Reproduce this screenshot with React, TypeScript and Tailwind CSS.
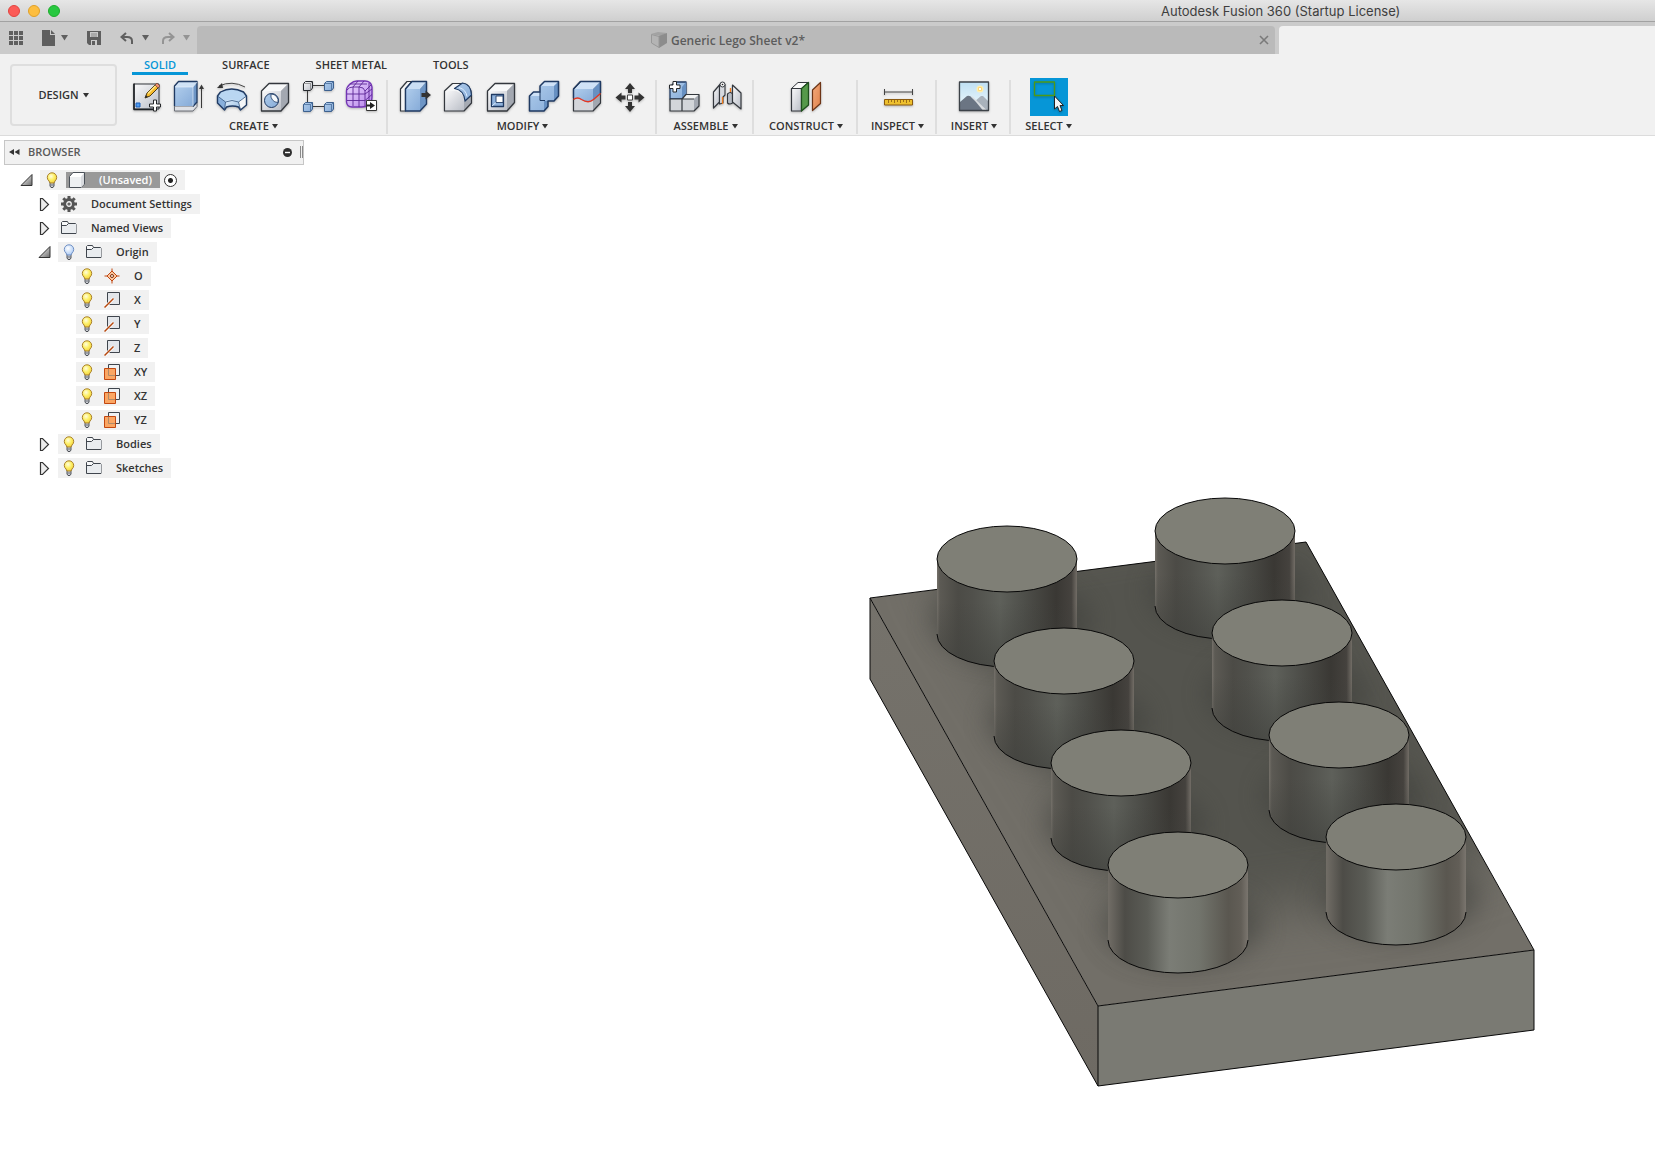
import { useState } from "react";
import type { ReactNode } from "react";
import clsx from "clsx";

type ChildrenType = { children: ReactNode };

const App = () => {
  return (
    <div className="min-h-screen flex flex-col bg-white font-['Open_Sans','Noto_Sans',sans-serif] text-[#333333] select-none">
      <Gradients />
      <TitleBar />
      <DocumentBar />
      <Ribbon />
      <Viewport />
    </div>
  );
};

export default App;

/* Window chrome */

const TitleBar = () => {
  return (
    <header className="h-[22px] shrink-0 flex items-center pl-2 border-b border-[#a2a2a2] bg-linear-to-b from-[#e6e6e6] to-[#cfcfcf]">
      <div className="flex gap-2">
        <button aria-label="Close" className="size-3 rounded-full bg-[#fc5b57] border border-[#e2443f]" />
        <button aria-label="Minimize" className="size-3 rounded-full bg-[#fdbe40] border border-[#e0a028]" />
        <button aria-label="Zoom" className="size-3 rounded-full bg-[#28c840] border border-[#1dad2b]" />
      </div>
      <h1 className="ml-[1101px] pt-px font-[Inter,sans-serif] text-[13px] leading-5 text-[#3e3e3e] whitespace-nowrap">
        Autodesk Fusion 360 (Startup License)
      </h1>
    </header>
  );
};

const Caret = ({ className }: { className?: string }) => (
  <svg width="7" height="6" viewBox="0 0 7 6" className={clsx("shrink-0", className)}>
    <path d="M0 0h7L3.5 5.5z" fill="currentColor" />
  </svg>
);

const SmallCaret = () => (
  <svg width="6" height="5" viewBox="0 0 6 5" className="shrink-0">
    <path d="M0 0h6L3 4.5z" fill="currentColor" />
  </svg>
);

const DocumentBar = () => {
  return (
    <div className="h-8 shrink-0 flex bg-[#cbcbcb] text-[#5f5f5f]">
      <div className="flex items-center pl-[9px] pr-[7px]">
        <button aria-label="Data panel">
          <svg width="14" height="14" viewBox="0 0 14 14" fill="currentColor">
            {[0, 5, 10].map((y) =>
              [0, 5, 10].map((x) => (
                <rect key={`${x}-${y}`} x={x} y={y} width="4" height="4" />
              )),
            )}
          </svg>
        </button>
        <button aria-label="File" className="ml-[19px] flex items-center gap-1.5">
          <svg width="13" height="16" viewBox="0 0 13 16" fill="currentColor">
            <path d="M0 0h8v5h5v11H0z" />
            <path d="M9 0l4 4H9z" />
          </svg>
          <Caret />
        </button>
        <button aria-label="Save" className="ml-[19px]">
          <svg width="14" height="14" viewBox="0 0 14 14">
            <path d="M0 0h14v14H2l-2-2z" fill="currentColor" />
            <path d="M3 1h8v5H3zM4 9h6v5H4z" fill="#cbcbcb" />
            <path d="M4 3h6M4 5h6" stroke="#8a8a8a" />
            <path d="M5 10h3v4H5z" fill="currentColor" />
          </svg>
        </button>
        <button aria-label="Undo" className="ml-[19px] flex items-center gap-[9px]">
          <svg width="13" height="13" viewBox="0 0 13 13" fill="none" stroke="currentColor" strokeWidth="2">
            <path d="M6 1L1.5 5 6 9M2 5h5q5 0 5 4v3" />
          </svg>
          <Caret />
        </button>
        <button aria-label="Redo" className="ml-[13px] flex items-center gap-2 text-[#949494]">
          <svg width="13" height="13" viewBox="0 0 13 13" fill="none" stroke="currentColor" strokeWidth="2">
            <path d="M7 1l4.500 4L7 9M11 5H6q-5 0-5 4v3" />
          </svg>
          <Caret />
        </button>
      </div>
      <div className="flex-[1078] mt-1 flex items-center rounded-t bg-[#bababa]">
        <div className="flex-1 flex items-center justify-center gap-1">
          <svg width="16" height="16" viewBox="0 0 16 16">
            <path d="M0 2l7-2 9 1-6 3z" fill="#a2a2a2" />
            <path d="M16 1v10l-8 5V4z" fill="#8c8c8c" />
            <path d="M.5 2.5L8 4.5v11L.5 11z" fill="#b4b4b4" stroke="#989898" />
          </svg>
          <span className="pt-0.5 text-[12px] font-semibold text-[#5c5c5c] leading-4">
            Generic Lego Sheet v2*
          </span>
        </div>
        <button aria-label="Close document" className="mr-1.5">
          <svg width="10" height="10" viewBox="0 0 10 10">
            <path d="M1 1l8 8M9 1L1 9" stroke="#7a7a7a" strokeWidth="1.6" />
          </svg>
        </button>
      </div>
      <div className="flex-[376] ml-1 mt-1 rounded-tl bg-[#f1f1f1]" />
    </div>
  );
};

/* Ribbon */

const tabs = ["SOLID", "SURFACE", "SHEET METAL", "TOOLS"];

const Ribbon = () => {
  const [active, setActive] = useState("SOLID");

  return (
    <div className="h-[82px] shrink-0 flex bg-[#f1f1f1] border-b border-[#dcdcdc]">
      <button className="ml-2.5 mt-2.5 w-[107px] h-[62px] shrink-0 flex items-center justify-center gap-1 rounded border-2 border-[#dedede] text-[11px] font-semibold">
        DESIGN
        <SmallCaret />
      </button>
      <div>
        <nav className="flex gap-[22px] pl-[15px] pt-[3px]">
          {tabs.map((tab) => (
            <button
              key={tab}
              onClick={() => setActive(tab)}
              className={clsx(
                "h-[18px] px-3 border-b-3 text-[11px] leading-4 font-semibold whitespace-nowrap",
                tab === active ? "border-[#0696d7] text-[#0696d7]" : "border-transparent",
              )}
            >
              {tab}
            </button>
          ))}
        </nav>
        <div className="flex mt-[3px] pl-0.5">
          <Group label="CREATE" width="w-[269px]" icons={[SketchIcon, ExtrudeIcon, RevolveIcon, HoleIcon, PatternIcon, FormIcon]} />
          <Group label="MODIFY" width="w-[269px]" icons={[PressPullIcon, FilletIcon, ShellIcon, CombineIcon, SplitIcon, MoveIcon]} />
          <Group label="ASSEMBLE" width="w-[97px]" icons={[ComponentIcon, JointIcon]} />
          <Group label="CONSTRUCT" width="w-[104px]" icons={[PlaneIcon]} />
          <Group label="INSPECT" width="w-[79px]" icons={[MeasureIcon]} />
          <Group label="INSERT" width="w-[74px]" icons={[ImageIcon]} />
          <Group label="SELECT" width="w-[75px]" icons={[SelectIcon]} selected />
        </div>
      </div>
    </div>
  );
};

const Group = ({
  label,
  width,
  icons,
  selected,
}: {
  label: string;
  width: string;
  icons: (() => ReactNode)[];
  selected?: boolean;
}) => {
  return (
    <div className={clsx("relative flex flex-col items-center", width)}>
      <div className="flex gap-[5px]">
        {icons.map((Icon, i) => (
          <button
            key={i}
            aria-label={`${label} tool ${i + 1}`}
            className={clsx(
              "size-[38px] flex items-center justify-center",
              selected ? "bg-[#0696d7]" : "pb-0.5",
            )}
          >
            <Icon />
          </button>
        ))}
      </div>
      <button className="mt-0.5 flex items-center gap-[3px] text-[11px] leading-4 font-semibold">
        {label}
        <SmallCaret />
      </button>
      {!selected && <span className="absolute right-0 top-0.5 bottom-0 w-0.5 bg-[#dedede]" />}
    </div>
  );
};

const Gradients = () => (
  <svg className="absolute size-0" aria-hidden="true">
    <defs>
      <linearGradient id="grey" x1="0" y1="0" x2="1" y2="1">
        <stop offset="0" stopColor="#fafafb" />
        <stop offset="1" stopColor="#b9bdc6" />
      </linearGradient>
      <linearGradient id="blue" x1="0" y1="0" x2="1" y2="1">
        <stop offset="0" stopColor="#b0cdec" />
        <stop offset="1" stopColor="#86abd8" />
      </linearGradient>
      <linearGradient id="paleBlue" x1="0" y1="0" x2="1" y2="1">
        <stop offset="0" stopColor="#e4f1fc" />
        <stop offset="1" stopColor="#9cc0e5" />
      </linearGradient>
      <linearGradient id="purple" x1="0" y1="0" x2="1" y2="1">
        <stop offset="0" stopColor="#ecd9ff" />
        <stop offset="1" stopColor="#b684ea" />
      </linearGradient>
      <linearGradient id="orange" x1="0" y1="0" x2="1" y2="1">
        <stop offset="0" stopColor="#f3ab7d" />
        <stop offset="1" stopColor="#e0814b" />
      </linearGradient>
      <linearGradient id="sky" x1="0" y1="0" x2="0" y2="1">
        <stop offset="0" stopColor="#bfe0f3" />
        <stop offset="1" stopColor="#f2fafd" />
      </linearGradient>
      <linearGradient id="expander" x1="0" y1="0" x2="1" y2="1">
        <stop offset="0.3" stopColor="#d8d8d8" />
        <stop offset="1" stopColor="#6b6b6b" />
      </linearGradient>
      <radialGradient id="bulbOn" cx="0.4" cy="0.35" r="0.7">
        <stop offset="0" stopColor="#fffde0" />
        <stop offset="0.5" stopColor="#fdf067" />
        <stop offset="1" stopColor="#f3cf3a" />
      </radialGradient>
      <radialGradient id="bulbOff" cx="0.4" cy="0.35" r="0.7">
        <stop offset="0" stopColor="#ffffff" />
        <stop offset="1" stopColor="#a9c9f5" />
      </radialGradient>
    </defs>
  </svg>
);

const Svg32 = ({ children }: ChildrenType) => (
  <svg
    width="32"
    height="32"
    viewBox="0 0 32 32"
    fill="none"
    strokeLinejoin="round"
    className="shrink-0 drop-shadow-[0_1px_1px_rgba(0,0,0,0.25)]"
  >
    {children}
  </svg>
);

const DARK = "#33373d";
const NAVY = "#1f3a63";

const SketchIcon = () => (
  <Svg32>
    <path d="M4 4h25v25H4z" fill="url(#grey)" stroke={DARK} />
    <path d="M4 3.5V29.5h20" stroke="#1e2125" strokeWidth="1.6" />
    <rect x="6" y="23" width="4" height="4" fill="#4f9bf0" stroke="#1b5fb8" />
    <path d="M15 18l2-5L26 4l3 3-9 9z" fill="#f6bb2b" stroke="#4c3a14" />
    <path d="M17.5 13l8.5-8.5 1 1-8.500 8.500z" fill="#fde58a" />
    <path d="M25 5l2-2 3 3-2 2z" fill="#e98d70" stroke="#6b4034" strokeWidth="0.7" />
    <path d="M15 18l1-3 2 2z" fill="#2b2b2b" />
    <path d="M23.5 20h3v4h4v3h-4v4h-3v-4h-4v-3h4z" fill="#fff" stroke="#26282b" />
  </Svg32>
);

const ExtrudeIcon = () => (
  <Svg32>
    <path d="M1.5 26H20l4-4v4.5L20 31H1.5z" fill="#dfe1e6" stroke="#6a6e76" />
    <path d="M1.5 7l4-5H24l-4 5z" fill="#cfe2f6" />
    <path d="M1.5 7H20v19H1.5z" fill="url(#blue)" />
    <path d="M20 7l4-5v20l-4 4z" fill="#6e96c6" />
    <path d="M1.5 26V6l4-4.500H24V22l-4 4.500" stroke={NAVY} strokeWidth="1.3" />
    <path d="M2 7h18l4-5M20 7v19" stroke="#e2eefa" strokeWidth="0.7" />
    <path d="M28.5 28V7" stroke="#3a3a3a" />
    <path d="M28.5 4.5L31 9h-5z" fill="#3a3a3a" />
  </Svg32>
);

const RevolveIcon = () => (
  <Svg32>
    <path d="M3 6q13-6 26 1" stroke="#444" />
    <path d="M1 8l5-5 1 5z" fill="#333" />
    <path d="M1.5 16l3-4q11-6 23 0l3 4v9l-6 5-2-3q-6-2-12 0l-2 3-7-7z" fill="#b9d6f2" />
    <path d="M9.5 21q6.500-3 13 0v6q-6-2-12 0l-2 3z" fill="url(#paleBlue)" />
    <path d="M1.5 16v7l7 7 1-8z" fill="#89b0dc" />
    <path d="M22.5 22l8-6v9l-6 5z" fill="#f4f6f8" />
    <path d="M1.5 16l3-4q11-6 23 0l3 4v9l-6 5-2-3q-6-2-12 0l-2 3-7-7z" stroke={NAVY} strokeWidth="1.4" />
    <path d="M1.5 16l8 6q6.500-3 13 0l8-6M9.500 22l-1 8M22.500 22l2 8" stroke="#35557f" strokeWidth="0.8" />
  </Svg32>
);

/* grey block seen from the front left, shared by several tools */
const Block = () => (
  <>
    <path d="M2.5 11L10 3.500h19.500L22 11z" fill="#f7f8f9" />
    <path d="M2.5 11H22v20H2.500z" fill="url(#grey)" />
    <path d="M22 11l7.500-7.500v19L22 31z" fill="#a3a8b1" />
    <path d="M2.5 31V11L10 3.500h19.500v19L22 31z" stroke={DARK} strokeWidth="1.3" />
  </>
);

const HoleIcon = () => (
  <Svg32>
    <Block />
    <circle cx="12.5" cy="20.5" r="7" fill="url(#blue)" stroke={NAVY} />
    <path d="M12 14a7 7 0 0 0 7 8.500A7 7 0 0 0 12 14z" fill="#f6f9fc" stroke={NAVY} strokeWidth="0.8" />
  </Svg32>
);

const SmallBox = ({ x, y, grey }: { x: number; y: number; grey?: boolean }) => (
  <g transform={`translate(${x} ${y})`}>
    <path
      d="M.5 9.500V2.500l2-2h7V7l-2 2.500z"
      fill={grey ? "url(#grey)" : "url(#blue)"}
      stroke={grey ? "#25292e" : "#3d618f"}
    />
    <path d="M.5 2.500h7v7M7.500 2.500l2-2" stroke={grey ? "#777" : "#3d618f"} strokeWidth="0.7" />
  </g>
);

const PatternIcon = () => (
  <Svg32>
    <path d="M10 5.500h12M5.500 10v12M10 26.500h12" stroke="#3a3a3a" />
    <SmallBox x={1} y={1} grey />
    <SmallBox x={22} y={1} />
    <SmallBox x={1} y={22} />
    <SmallBox x={22} y={22} />
  </Svg32>
);

const FormIcon = () => (
  <Svg32>
    <path
      d="M1.5 11q0-4 3.500-7t7-3h8q6 0 7 6v10q0 5-4 8-2 2-6 2H7q-5 0-5.500-5z"
      fill="url(#purple)"
      stroke="#7335b5"
      strokeWidth="1.4"
    />
    <path
      d="M2 10q2-3 6-3h6q5 0 6 4v15M8 7v19M14 7v20M2 14h18M2 20.500h18M20 11l6-6M20 14l7-5M20 20.500l7-6M24 3v20M8 7l5-6M14 7l5-6M5 4h17"
      stroke="#5b2795"
      strokeWidth="0.9"
    />
    <path d="M21.5 20.500h10v10h-10z" fill="#fff" stroke="#333" />
    <path d="M22 24.500h3V22l5 3.500-5 3.500v-2.500h-3z" fill="#222" />
  </Svg32>
);

const PressPullIcon = () => (
  <Svg32>
    <path d="M1.5 31V9L8 1.500h5L6.500 9v22z" fill="#f4f5f6" stroke={DARK} strokeWidth="1.2" />
    <path d="M6.5 9L13 1.500h14.500L21 9z" fill="#cbdff5" />
    <path d="M6.5 9H21v22H6.500z" fill="url(#blue)" />
    <path d="M21 9l6.500-7.500V24L21 31z" fill="#6d95c5" />
    <path d="M6.5 31V9L13 1.500h14.500V24L21 31z" stroke={NAVY} strokeWidth="1.4" />
    <path d="M22.5 13h4v-2.500l5.500 4.500-5.500 4.500V17h-4z" fill="#333" />
  </Svg32>
);

const FilletIcon = () => (
  <Svg32>
    <path d="M2.5 11l8-7.500H22q7 2 7.500 12V23L22 31H2.500z" fill="#f5f6f7" />
    <path d="M2.5 11H14q8 2 8 10v10H2.500z" fill="url(#grey)" />
    <path d="M22 21l7.500-6v8L22 31z" fill="#a5aab3" />
    <path d="M2.5 31V11l8-7.500H22q7 2 7.500 12V23L22 31z" stroke={DARK} strokeWidth="1.2" />
    <path d="M12.5 8.500L20.500 3Q29 4 29.500 15l-6.500 6q-1-11-10.500-12.500z" fill="url(#blue)" stroke={NAVY} strokeWidth="1.2" />
    <path d="M17 7.500q7 2 8 9" stroke="#dcecff" />
  </Svg32>
);

const ShellIcon = () => (
  <Svg32>
    <Block />
    <path d="M6.5 14.500h12v12h-12z" fill="#8fb2dc" stroke={NAVY} strokeWidth="1.3" />
    <path d="M7 26l4-3.500h7" stroke="#dcebfb" />
    <path d="M11 16h7v6.500h-7z" fill="#fff" stroke={NAVY} strokeWidth="0.9" />
  </Svg32>
);

const CombineIcon = () => (
  <Svg32>
    <path d="M1.5 31V16l4-4H12V6l4.500-4.500h14V16L26 21h-6v5.500L16 31z" fill="url(#blue)" />
    <path d="M12 6l4.500-4.500h14L26 6z" fill="#cfe2f7" />
    <path d="M1.5 16l4-4H12v4z" fill="#cfe2f7" />
    <path d="M26 6l4.500-4.500V16L26 21zM16 21h4v5.500L16 31z" fill="#6790c2" />
    <path d="M1.5 31V16l4-4H12V6l4.500-4.500h14V16L26 21h-6v5.500L16 31z" stroke={NAVY} strokeWidth="1.5" />
    <path d="M12 12v8.500h5" stroke={NAVY} />
  </Svg32>
);

const SplitIcon = () => (
  <Svg32>
    <path d="M2.5 9l7-7.500h20L22 9z" fill="#cfe2f7" />
    <path d="M2.5 9H22v14H2.500z" fill="url(#blue)" />
    <path d="M22 9l7.500-7.500v14L22 21z" fill="#6790c2" />
    <path d="M2.5 20q4-3 8 0 7 4 11.500 0v11H2.500z" fill="#d3d5da" />
    <path d="M22 20l7.500-6v9L22 31z" fill="#a2a7b0" />
    <path d="M2.5 31V9l7-7.500h20V23L22 31z" stroke={DARK} strokeWidth="1.2" />
    <path d="M2.5 18V9l7-7.500h20V13" stroke={NAVY} strokeWidth="1.3" />
    <path d="M2.5 19.500q4-3 8 0 7 4.500 12 0l7-6" stroke="#e5341f" strokeWidth="1.3" />
  </Svg32>
);

const MoveIcon = () => (
  <Svg32>
    <path
      d="M16 3l5 6h-3v4h-4V9h-3zM16 32l5-6h-3v-4h-4v4h-3zM1.500 17.500l6-5v3h4v4h-4v3zM30.500 17.500l-6-5v3h-4v4h4v3z"
      fill="#333"
    />
    <rect x="13.5" y="15" width="5" height="5" fill="#fff" stroke="#444" />
  </Svg32>
);

const ComponentIcon = () => (
  <Svg32>
    <path d="M2 19V7l5-5h11v12l-4 5z" fill="url(#blue)" stroke={NAVY} strokeWidth="1.3" />
    <path d="M14 7l4-5v12l-4 5z" fill="#6790c2" />
    <path d="M14 19l4-4.500h13L26 19z" fill="#f1f2f3" />
    <path d="M2 19h24v12H2z" fill="#d3d6da" />
    <path d="M26 19l5-4.500V26l-5 5z" fill="#a5aab3" />
    <path d="M2 19h12l4-4.500h13V26l-5 5H2zM14 19v12M14 19h12" stroke={DARK} strokeWidth="1.2" />
    <path d="M5 1.500h3.500V5H12v3.500H8.500V12H5V8.500H1.500V5H5z" fill="#fff" stroke="#26282b" />
  </Svg32>
);

const JointIcon = () => (
  <Svg32>
    <path d="M2.5 12l6-7v17l-6 6z" fill="url(#grey)" stroke={DARK} strokeWidth="1.2" />
    <path d="M8.5 24V5q1-2 3-2t2.500 2v10l-2 2v6z" fill="#d6d9de" stroke={DARK} strokeWidth="1.1" />
    <circle cx="11.5" cy="4.5" r="2.5" fill="#f4f4f4" stroke={DARK} />
    <circle cx="11.5" cy="4.5" r="0.8" fill="#222" />
    <path d="M11.5 17v7M19.500 8v6" stroke="#ee7a1c" strokeWidth="1.3" />
    <path d="M16.5 14q3-3 5 0v9q-3 2-5 0z" fill="#b7bcc5" stroke={DARK} strokeWidth="1.1" />
    <path d="M21.5 5l8.500 8v16l-8.500-7z" fill="url(#grey)" stroke={DARK} strokeWidth="1.2" />
  </Svg32>
);

const PlaneIcon = () => (
  <Svg32>
    <path d="M1.5 8.500l6.500-6h10l-6.500 6z" fill="#fafafa" stroke={DARK} />
    <path d="M1.5 8.500h10V31h-10z" fill="url(#grey)" stroke={DARK} strokeWidth="1.2" />
    <path d="M11.5 8.500l7-6V25l-7 6z" fill="#55994a" stroke="#1d4f1c" strokeWidth="1.3" />
    <path d="M22.5 10l8-7.500v21l-8 7z" fill="url(#orange)" stroke="#6d3416" strokeWidth="1.2" />
  </Svg32>
);

const MeasureIcon = () => (
  <Svg32>
    <path d="M2.5 9v6M30.500 9v6M2.500 12h28" stroke="#444" />
    <path d="M2.5 19.500h28V25h-28z" fill="#eec02e" stroke="#8a5a10" />
    <path
      d="M6.5 20v3M9.500 20v2M12.500 20v3M15.500 20v2M18.500 20v3M21.500 20v2M24.500 20v3M27.500 20v2"
      stroke="#8a5a10"
      strokeWidth="0.8"
    />
  </Svg32>
);

const ImageIcon = () => (
  <Svg32>
    <path d="M1.5 2h29v28.500h-29z" fill="url(#sky)" />
    <circle cx="22" cy="9" r="3.5" fill="#ffeeb0" />
    <rect x="20.5" y="7.5" width="3" height="3" fill="#fff" stroke="#fbd979" />
    <path d="M16 22l7-6h2l6 6v9H20z" fill="#a9b2bb" />
    <path d="M2 22l7-6q3-1 5 2l14 12.500H2z" fill="#6b7583" />
    <path d="M13 16l2 1 14 13.500h-4z" fill="#d9dcdf" />
    <path d="M1.5 2h29v28.500h-29z" stroke="#3c4248" strokeWidth="1.3" />
  </Svg32>
);

const SelectIcon = () => (
  <Svg32>
    <rect x="1.5" y="1" width="20" height="13.5" stroke="#4d9a17" strokeWidth="1.3" />
    <path d="M21.5 15v13l3-2.500 2 5 2.500-1-2-5h3.500z" fill="#f4f4f6" stroke="#222" />
  </Svg32>
);

/* Browser tree */

type TreeNode = {
  label: string;
  depth: number;
  kind: "root" | "settings" | "folder" | "point" | "axis" | "plane";
  open?: boolean;
  bulb?: "on" | "off";
};

const nodes: TreeNode[] = [
  { label: "(Unsaved)", depth: 0, kind: "root", open: true, bulb: "on" },
  { label: "Document Settings", depth: 1, kind: "settings" },
  { label: "Named Views", depth: 1, kind: "folder" },
  { label: "Origin", depth: 1, kind: "folder", open: true, bulb: "off" },
  { label: "O", depth: 2, kind: "point", bulb: "on" },
  { label: "X", depth: 2, kind: "axis", bulb: "on" },
  { label: "Y", depth: 2, kind: "axis", bulb: "on" },
  { label: "Z", depth: 2, kind: "axis", bulb: "on" },
  { label: "XY", depth: 2, kind: "plane", bulb: "on" },
  { label: "XZ", depth: 2, kind: "plane", bulb: "on" },
  { label: "YZ", depth: 2, kind: "plane", bulb: "on" },
  { label: "Bodies", depth: 1, kind: "folder", bulb: "on" },
  { label: "Sketches", depth: 1, kind: "folder", bulb: "on" },
];

const Browser = () => {
  return (
    <aside className="absolute left-1 top-1 w-[300px]">
      <div className="h-[25px] flex items-center pl-1 pb-px border border-[#c6c6c6] bg-[#f1f1f1]">
        <button aria-label="Collapse browser">
          <svg width="11" height="8" viewBox="0 0 11 8" fill="#333">
            <path d="M5 1v6L0 4zM10.500 1v6l-5-3z" />
          </svg>
        </button>
        <h2 className="ml-2 text-[11px] leading-4 font-semibold text-[#5a5a5a]">BROWSER</h2>
        <button aria-label="Hide browser" className="ml-auto">
          <svg width="9" height="9" viewBox="0 0 9 9">
            <circle cx="4.5" cy="4.5" r="4.5" fill="#2f2f2f" />
            <path d="M2 4.500h5" stroke="#fff" strokeWidth="1.4" />
          </svg>
        </button>
        <span className="ml-2 w-[3px] h-3 border-l border-r border-[#8a8a8a]" />
      </div>
      <ul className="mt-[5px] space-y-1">
        {nodes.map((node) => (
          <TreeRow key={node.label} node={node} />
        ))}
      </ul>
    </aside>
  );
};

const indents = ["pl-4", "pl-[34px]", "pl-[72px]"];

const TreeRow = ({ node }: { node: TreeNode }) => {
  return (
    <li className={clsx("h-5 flex items-center", indents[node.depth])}>
      {node.depth < 2 && <Expander open={!!node.open} />}
      {node.kind === "root" ? (
        <div className="h-5 flex items-center pl-1 pr-2 bg-[#f1f1f1] text-[11px] leading-4 font-semibold">
          <BulbButton node={node} />
          <button className="ml-[7px] h-4 pl-[3px] pr-2 flex items-center gap-[14px] bg-[#999999] text-white">
            <BodyIcon />
            {node.label}
          </button>
          <input
            type="radio"
            defaultChecked
            aria-label={`Activate ${node.label}`}
            className="ml-1 size-[13px] appearance-none rounded-full border border-[#333333] bg-[radial-gradient(circle,#222_2px,#fff_3px)]"
          />
        </div>
      ) : (
        <div className="h-5 flex items-center gap-2.5 pl-[3px] pr-2 bg-[#f1f1f1] text-[11px] leading-4 font-semibold">
          {node.bulb && <BulbButton node={node} />}
          <button className="flex items-center gap-[14px]">
            <NodeIcon kind={node.kind} />
            {node.label}
          </button>
        </div>
      )}
    </li>
  );
};

const Expander = ({ open }: { open: boolean }) => (
  <button aria-label={open ? "Collapse" : "Expand"} className="w-5 shrink-0 flex">
    {open ? (
      <svg width="13" height="13" viewBox="0 0 13 13">
        <path d="M12 .5v11H1z" fill="url(#expander)" stroke="#333" />
      </svg>
    ) : (
      <svg width="13" height="15" viewBox="0 0 13 15">
        <path d="M2.5 1.500v12h2l6-6-6-6z" fill="#ececec" stroke="#333" strokeWidth="1.2" />
      </svg>
    )}
  </button>
);

const BulbButton = ({ node }: { node: TreeNode }) => {
  const on = node.bulb === "on";

  return (
    <button aria-label={`Toggle ${node.label}`}>
      <svg width="15" height="16" viewBox="0 0 15 16" className="block">
        <path d="M6 10h4v4l-1 1.500H7L6 14z" fill="#c9ccd2" stroke="#3f434a" strokeWidth="0.9" />
        <path
          d="M8 .8a4.600 4.600 0 0 1 4.700 4.700q0 2-1.700 3.500l-1 2H6L5 9Q3.300 7.500 3.300 5.500A4.600 4.600 0 0 1 8 .8z"
          fill={on ? "url(#bulbOn)" : "url(#bulbOff)"}
          stroke={on ? "#a9802a" : "#6f8fc4"}
        />
        <path d="M6.5 13h3" stroke="#5a5e66" strokeWidth="0.8" />
      </svg>
    </button>
  );
};

const BodyIcon = () => (
  <svg width="16" height="16" viewBox="0 0 16 16">
    <path d="M.5 4.500L4 .5h11.500V12L12 15.500H.5z" fill="#ffffff" stroke="#4a5058" />
    <path d="M12 4.500L15 1v11l-3 3.500z" fill="#d9dbdf" />
    <path d="M1 5h11v10H1z" fill="#eef0f2" />
  </svg>
);

const NodeIcon = ({ kind }: { kind: TreeNode["kind"] }) => {
  if (kind === "settings") {
    return (
      <svg width="16" height="16" viewBox="0 0 16 16" fill="none" stroke="#555">
        <circle cx="8" cy="8" r="4.4" strokeWidth="3" />
        <circle cx="8" cy="8" r="1" strokeWidth="1.2" />
        <path
          d="M8 0v3M8 13v3M0 8h3M13 8h3M2.300 2.300l2 2M11.700 11.700l2 2M2.300 13.700l2-2M11.700 4.300l2-2"
          strokeWidth="3"
        />
      </svg>
    );
  }
  if (kind === "folder") {
    return (
      <svg width="16" height="14" viewBox="0 0 16 14">
        <path d="M.5 12.500v-11l1-1h5l1 2h7l.5 1v9z" fill="#f7f8f9" stroke="#3f454d" />
        <path d="M1 5h4.500L7 3h8v9H1z" fill="#e9ecef" />
        <path d="M1 4.500h4.500l2-2" fill="none" stroke="#3f454d" />
      </svg>
    );
  }
  if (kind === "point") {
    return (
      <svg width="16" height="16" viewBox="0 0 16 16">
        <path d="M8 .5v15M.5 8h15" stroke="#c2470f" />
        <path d="M8 3l5 5-5 5-5-5z" fill="#fbc79f" stroke="#c2470f" />
        <circle cx="8" cy="8" r="1.5" fill="#fff" stroke="#7c2a05" />
      </svg>
    );
  }
  if (kind === "axis") {
    return (
      <svg width="16" height="16" viewBox="0 0 16 16">
        <path d="M3.5.5h12v12h-12z" fill="#e3e6ea" stroke="#3f454d" />
        <path d="M.5 15.500l9-9" stroke="#fff" strokeWidth="3" />
        <path d="M.5 15.500l9-9" stroke="#b5480f" strokeWidth="1.5" />
      </svg>
    );
  }
  return (
    <svg width="16" height="16" viewBox="0 0 16 16">
      <path d="M4.5.5h11v11h-11z" fill="#eef0f2" stroke="#3f454d" />
      <path d="M.5 4.500h11v11H.5z" fill="#fba663" stroke="#c2470f" />
      <path d="M4.5 5v6.500H11" fill="none" stroke="#b08a68" />
    </svg>
  );
};

/* Model view */

const RX = 70;
const RY = 33;
const STUD_HEIGHT = 75;

const studs = [0, 1, 2, 3].flatMap((row) =>
  [1, 0].map((col) => ({
    cx: 1007 + row * 57 + col * 218,
    cy: 560 + row * 102 - col * 28,
    lit: row === 3,
  })),
);

const Stud = ({ cx, cy, lit }: { cx: number; cy: number; lit: boolean }) => {
  const side = `M${cx - RX} ${cy}v${STUD_HEIGHT}a${RX} ${RY} 0 0 0 ${2 * RX} 0v${-STUD_HEIGHT}z`;

  return (
    <g>
      <path d={side} fill={lit ? "url(#studLit)" : "url(#studSide)"} />
      {!lit && <path d={side} fill="url(#studFade)" />}
      <path d={`M${cx - RX} ${cy + STUD_HEIGHT}a${RX} ${RY} 0 0 0 ${2 * RX} 0`} fill="none" stroke="#080808" />
      <ellipse cx={cx} cy={cy} rx={RX} ry={RY} fill="#7f7f76" stroke="#080808" />
    </g>
  );
};

const Viewport = () => {
  return (
    <main className="relative flex-1 bg-white">
      <svg viewBox="0 137 1655 1021" className="block w-full" role="img" aria-label="Generic Lego Sheet">
        <defs>
          <linearGradient id="studSide">
            <stop offset="0" stopColor="#75716a" />
            <stop offset="0.02" stopColor="#5c5a54" />
            <stop offset="0.15" stopColor="#4c4b46" />
            <stop offset="0.25" stopColor="#50504b" />
            <stop offset="0.45" stopColor="#5e605a" />
            <stop offset="0.6" stopColor="#50514c" />
            <stop offset="0.85" stopColor="#3a3834" />
            <stop offset="0.96" stopColor="#45423e" />
            <stop offset="1" stopColor="#726d66" />
          </linearGradient>
          <linearGradient id="studLit">
            <stop offset="0" stopColor="#716d66" />
            <stop offset="0.12" stopColor="#4d4c47" />
            <stop offset="0.28" stopColor="#5b5c56" />
            <stop offset="0.44" stopColor="#7b7d76" />
            <stop offset="0.65" stopColor="#72746c" />
            <stop offset="0.86" stopColor="#5a5750" />
            <stop offset="0.95" stopColor="#625e57" />
            <stop offset="1" stopColor="#7a756e" />
          </linearGradient>
          <linearGradient id="studFade" x1="0" y1="0" x2="0" y2="1">
            <stop offset="0.4" stopColor="#3f403c" stopOpacity="0" />
            <stop offset="1" stopColor="#3f403c" stopOpacity="0.6" />
          </linearGradient>
          <linearGradient id="leftFace" x1="0" y1="0" x2="0" y2="1">
            <stop offset="0" stopColor="#75726b" />
            <stop offset="1" stopColor="#6e6a63" />
          </linearGradient>
          <filter id="soft" x="-30%" y="-30%" width="160%" height="160%" colorInterpolationFilters="sRGB">
            <feGaussianBlur stdDeviation="28" />
          </filter>
          <filter id="contact" x="-30%" y="-50%" width="160%" height="200%" colorInterpolationFilters="sRGB">
            <feGaussianBlur stdDeviation="12" />
          </filter>
          <clipPath id="topFace">
            <path d="M870 599L1306 543L1534 951L1098 1007z" />
          </clipPath>
        </defs>
        <path d="M870 599V680L1098 1087V1007z" fill="url(#leftFace)" />
        <path d="M1098 1007L1534 951V1031L1098 1087z" fill="#7a7a73" />
        <g clipPath="url(#topFace)">
          <path d="M870 599L1306 543L1534 951L1098 1007z" fill="#726f68" />
          <path d="M930 560L1340 490L1510 850L1380 895L1150 925z" fill="#54544e" filter="url(#soft)" />
          {studs.map(({ cx, cy }) => (
            <ellipse
              key={`${cx}-${cy}`}
              cx={cx + 4}
              cy={cy + STUD_HEIGHT - 14}
              rx={RX + 10}
              ry={RY + 8}
              fill="#3c3d39"
              opacity="0.5"
              filter="url(#contact)"
            />
          ))}
        </g>
        <path
          d="M870 599L1306 543L1534 951L1098 1007zM870 599V680L1098 1087L1534 1031V951M1098 1007V1087"
          fill="none"
          stroke="#080808"
        />
        {studs.map((stud) => (
          <Stud key={`${stud.cx}-${stud.cy}`} {...stud} />
        ))}
      </svg>
      <Browser />
    </main>
  );
};
